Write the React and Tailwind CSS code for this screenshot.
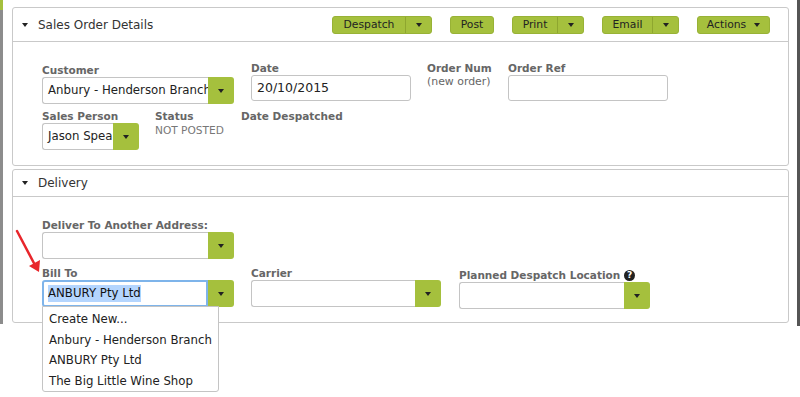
import React from 'react';

const GREEN = 'bg-[#a5c03d]';

const Caret = () => (
  <span className="inline-block w-0 h-0 border-l-[3.5px] border-r-[3.5px] border-t-[4px] border-l-transparent border-r-transparent border-t-[#222]" />
);

const Select = ({ width, value, focused }) => (
  <div className={`flex h-[27px] ${width}`}>
    <div
      className={`flex-1 min-w-0 flex items-center bg-white rounded-l-[3px] overflow-hidden whitespace-nowrap ${
        focused ? 'border-2 border-[#7eb4ea] pl-[4px]' : 'border border-[#c4c4c4] border-r-0 pl-[5px]'
      }`}
    >
      {focused ? <span className="bg-[#b4d5fe] text-[#111]">{value}</span> : <span className="text-[#222]">{value}</span>}
    </div>
    <div className={`w-[26px] shrink-0 ${GREEN} rounded-r-[3px] flex items-center justify-center`}>
      <Caret />
    </div>
  </div>
);

const Label = ({ children, className = '' }) => (
  <div className={`font-bold text-[#666] text-[10.5px] leading-[14px] whitespace-nowrap ${className}`}>{children}</div>
);

const Btn = ({ label, split, caret, width }) => (
  <div className={`flex h-[18px] ${GREEN} rounded-[3px] border border-[#98b236] text-[#222] text-[10.75px] leading-[16px]`}>
    <div className={`flex items-center justify-center gap-[8px] ${width}`}>
      {label}
      {caret && <Caret />}
    </div>
    {split && (
      <div className="w-[26px] border-l border-[#8ea62f] flex items-center justify-center">
        <Caret />
      </div>
    )}
  </div>
);

const Panel = ({ title, actions, children, headerH }) => (
  <div className="border border-[#c9c9c9] rounded-[3px] bg-white">
    <div className={`flex items-center border-b border-[#c9c9c9] pl-[9px] pr-[18px] ${headerH}`}>
      <Caret />
      <span className="ml-[10px] text-[12px] text-[#333]">{title}</span>
      <div className="ml-auto flex gap-[18px]">{actions}</div>
    </div>
    {children}
  </div>
);

export default function App() {
  return (
    <div
      className="relative w-[800px] h-[397px] bg-white flex items-start overflow-hidden text-[11.75px]"
      style={{ fontFamily: '"DejaVu Sans", Verdana, sans-serif' }}
    >
      <div className="w-[3px] h-[324px] flex flex-col">
        <div className={`h-[10px] ${GREEN}`} />
        <div className="flex-1 bg-[#8c8c8c]" />
      </div>

      <div className="ml-[9px] mt-[7px] w-[778px] flex flex-col gap-[3px]">
        <Panel
          title="Sales Order Details"
          headerH="h-[34px]"
          actions={
            <>
              <Btn label="Despatch" split width="w-[72px]" />
              <Btn label="Post" width="w-[42px]" />
              <Btn label="Print" split width="w-[44px]" />
              <Btn label="Email" split width="w-[49px]" />
              <Btn label="Actions" caret width="w-[71px]" />
            </>
          }
        >
          <div className="pl-[29px] pt-[19px] pb-[15px]">
            <div className="flex items-start">
              <div className="w-[192px] pt-[2px]">
                <Label>Customer</Label>
                <Select width="w-[192px]" value="Anbury - Henderson Branch" />
              </div>
              <div className="ml-[17px] w-[160px]">
                <Label>Date</Label>
                <div className="h-[26px] border border-[#c4c4c4] rounded-[3px] flex items-center pl-[5px] text-[#222] text-[12.5px]">
                  20/10/2015
                </div>
              </div>
              <div className="ml-[16px] w-[81px]">
                <Label>Order Num</Label>
                <div className="text-[#666] text-[10.9px] leading-[14px] whitespace-nowrap">(new order)</div>
              </div>
              <div className="w-[160px]">
                <Label>Order Ref</Label>
                <div className="h-[26px] border border-[#c4c4c4] rounded-[3px]" />
              </div>
            </div>
            <div className="flex items-start mt-[5px]">
              <div className="w-[97px]">
                <Label>Sales Person</Label>
                <Select width="w-[97px]" value="Jason Spears" />
              </div>
              <div className="ml-[16px] w-[86px]">
                <Label>Status</Label>
                <div className="text-[#777] text-[10.6px] leading-[14px] whitespace-nowrap">NOT POSTED</div>
              </div>
              <div>
                <Label>Date Despatched</Label>
              </div>
            </div>
          </div>
        </Panel>

        <Panel title="Delivery" headerH="h-[27px]">
          <div className="pl-[29px] pt-[21px] pb-[13px]">
            <Label>Deliver To Another Address:</Label>
            <Select width="w-[192px]" value="" />
            <div className="flex items-start mt-[7px]">
              <div className="w-[192px]">
                <Label>Bill To</Label>
                <Select width="w-[192px]" value="ANBURY Pty Ltd" focused />
              </div>
              <div className="ml-[17px] w-[190px]">
                <Label>Carrier</Label>
                <Select width="w-[190px]" value="" />
              </div>
              <div className="ml-[18px] w-[191px] pt-[2px]">
                <Label className="flex items-center gap-[4px]">
                  Planned Despatch Location
                  <span className="w-[11px] h-[11px] rounded-full bg-[#222] text-white text-[9px] leading-[11px] font-bold flex items-center justify-center">?</span>
                </Label>
                <Select width="w-[191px]" value="" />
              </div>
            </div>
          </div>
        </Panel>
      </div>

      <div className="ml-[8px] w-[3px] h-[326px] bg-[#555]" />

      {/* Bill To dropdown list */}
      <div className="absolute left-[42px] top-[306px] w-[177px] bg-white border border-[#c4c4c4] rounded-b-[3px] pt-[2px] text-[#222] whitespace-nowrap">
        <div className="h-[20.5px] leading-[20.5px] pl-[6px]">Create New...</div>
        <div className="h-[20.5px] leading-[20.5px] pl-[6px]">Anbury - Henderson Branch</div>
        <div className="h-[20.5px] leading-[20.5px] pl-[6px]">ANBURY Pty Ltd</div>
        <div className="h-[20.5px] leading-[20.5px] pl-[6px]">The Big Little Wine Shop</div>
      </div>

      {/* red annotation arrow */}
      <svg className="absolute left-[12px] top-[226px]" width="34" height="50" viewBox="0 0 34 50">
        <line x1="5" y1="5" x2="24" y2="41" stroke="#e8262b" strokeWidth="2.5" strokeLinecap="round" />
        <polygon points="27,46 17,40 28,34" fill="#e8262b" />
      </svg>
    </div>
  );
}
